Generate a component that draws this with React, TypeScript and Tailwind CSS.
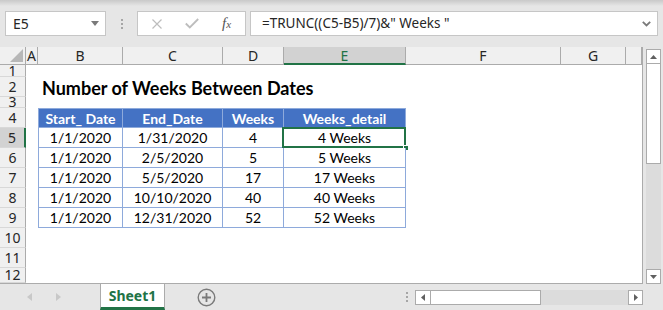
import React from "react";

const cols = [
  { id: "A", w: "w-[12px]" },
  { id: "B", w: "w-[85px]" },
  { id: "C", w: "w-[100px]" },
  { id: "D", w: "w-[61px]" },
  { id: "E", w: "w-[122px]" },
  { id: "F", w: "w-[155px]" },
  { id: "G", w: "w-[65px]" },
  { id: "", w: "w-[16px]" },
];

const rows = [
  { n: 1, h: "h-[12px]" },
  { n: 2, h: "h-[20px]" },
  { n: 3, h: "h-[11px]" },
  { n: 4, h: "h-[20px]" },
  { n: 5, h: "h-[20px]" },
  { n: 6, h: "h-[20px]" },
  { n: 7, h: "h-[20px]" },
  { n: 8, h: "h-[20px]" },
  { n: 9, h: "h-[20px]" },
  { n: 10, h: "h-[20px]" },
  { n: 11, h: "h-[20px]" },
  { n: 12, h: "h-[15px]" },
];

const header = ["Start_ Date", "End_Date", "Weeks", "Weeks_detail"];
const data: Record<number, string[]> = {
  5: ["1/1/2020", "1/31/2020", "4", "4 Weeks"],
  6: ["1/1/2020", "2/5/2020", "5", "5 Weeks"],
  7: ["1/1/2020", "5/5/2020", "17", "17 Weeks"],
  8: ["1/1/2020", "10/10/2020", "40", "40 Weeks"],
  9: ["1/1/2020", "12/31/2020", "52", "52 Weeks"],
};

const cellFont = "font-['Lato',sans-serif] text-[14px]";

const Toolbar = () => (
  <div className="h-[47px] bg-[#e6e6e6] font-['Noto_Sans',sans-serif]">
    <div className="h-[6px] bg-linear-to-b from-[#c9c9c9] to-[#e6e6e6]" />
    <div className="flex items-center pl-[5px] pt-[5px]">
      <div className="w-[101px] h-[25px] bg-white border border-[#c6c6c6] flex items-center justify-between pl-[7px] pr-[6px] text-[14px] text-[#262626]">
        <span>E5</span>
        <svg width="8" height="5" viewBox="0 0 8 5">
          <path d="M0 0h8L4 5z" fill="#7a7a7a" />
        </svg>
      </div>
      <div className="w-[31px] flex flex-col items-center gap-[2px]">
        <div className="w-[2px] h-[2px] bg-[#a6a6a6]" />
        <div className="w-[2px] h-[2px] bg-[#a6a6a6]" />
        <div className="w-[2px] h-[2px] bg-[#a6a6a6]" />
      </div>
      <div className="w-[109px] h-[25px] bg-white border border-[#c6c6c6] flex items-center pl-[14px] gap-[23px]">
        <svg width="10" height="10" viewBox="0 0 10 10">
          <path d="M0.5 0.5l9 9M9.5 0.5l-9 9" stroke="#bdbdbd" strokeWidth="1.2" />
        </svg>
        <svg width="14" height="11" viewBox="0 0 14 11">
          <path d="M0.8 5.5l4 4L13.2 1" stroke="#bdbdbd" strokeWidth="1.8" fill="none" />
        </svg>
        <span className="font-['Liberation_Serif',serif] italic text-[15px] text-[#555] leading-none">
          f<span className="text-[11px]">x</span>
        </span>
      </div>
      <div className="ml-[4px] w-[408px] h-[25px] bg-white border border-[#c6c6c6] flex items-center justify-between pl-[11px] pr-[6px] text-[13.5px] text-[#262626]">
        <span>=TRUNC((C5-B5)/7)&amp;" Weeks "</span>
        <svg width="9" height="6" viewBox="0 0 9 6">
          <path d="M0.8 0.8l3.7 3.7 3.7-3.7" stroke="#7a7a7a" strokeWidth="1.8" fill="none" />
        </svg>
      </div>
    </div>
  </div>
);

const ColumnHeader = () => (
  <div className="flex h-[18px] font-['Noto_Sans',sans-serif] text-[14px] text-[#262626]">
    <div className="w-[26px] relative bg-[#f0f0f0] border-r border-b border-[#ababab]">
      <svg className="absolute right-[2px] bottom-[2px]" width="13" height="13" viewBox="0 0 13 13">
        <path d="M13 0V13H0z" fill="#b7b7b7" />
      </svg>
    </div>
    {cols.map((c) => (
      <div
        key={c.id || "h"}
        className={`${c.w} flex items-center justify-center leading-none border-r ${
          c.id === "E"
            ? "bg-[#d2d2d2] text-[#217346] border-b-2 border-b-[#217346] border-r-[#ababab] pt-px"
            : "bg-[#f0f0f0] border-b border-[#ababab]"
        }`}
      >
        {c.id}
      </div>
    ))}
  </div>
);

const Row = ({ n, h }: { n: number; h: string }) => {
  const active = n === 5;
  const cells = cols.map((c, i) => {
    const base = `${c.w} h-full shrink-0`;
    if (n === 2 && c.id === "B") {
      return (
        <div key={i} className={`${base} relative`}>
          <span className="absolute left-[4px] top-[-2px] whitespace-nowrap font-['Lato',sans-serif] font-bold text-[18px] text-black">
            Number of Weeks Between Dates
          </span>
        </div>
      );
    }
    const col = ["B", "C", "D", "E"].indexOf(c.id);
    if (col >= 0 && n >= 4 && n <= 9) {
      const isHead = n === 4;
      const text = isHead ? header[col] : data[n][col];
      return (
        <div
          key={i}
          className={`${base} relative flex items-center justify-center border-r border-b border-[#8eaadb] ${cellFont} ${
            col === 0 ? "border-l" : ""
          } ${isHead ? "border-t bg-[#4472c4] text-white font-bold" : "bg-white text-black"}`}
        >
          {text}
          {n === 5 && col === 3 && (
            <>
              <div className="absolute -left-[2px] -top-[1px] -right-px -bottom-px border-2 border-[#217346]" />
              <div className="absolute -right-[4px] -bottom-[4px] w-[6px] h-[6px] bg-[#217346] border border-white" />
            </>
          )}
        </div>
      );
    }
    return <div key={i} className={`${base} bg-white`} />;
  });

  return (
    <div className={`flex ${h}`}>
      <div
        className={`w-[26px] shrink-0 flex items-center justify-center overflow-hidden leading-none font-['Noto_Sans',sans-serif] text-[14px] text-[#262626] border-b border-b-[#d8d8d8] ${
          active ? "bg-[#d2d2d2] border-r-2 border-r-[#217346]" : "bg-[#f0f0f0] border-r border-r-[#ababab]"
        }`}
      >
        {n}
      </div>
      {cells}
    </div>
  );
};

const VScroll = () => (
  <div className="ml-[3px] mt-[2px] w-[15px] h-[235px] flex flex-col bg-[#dcdcdc]">
    <div className="h-[15px] bg-white border border-[#ababab] flex items-center justify-center">
      <svg width="7" height="4" viewBox="0 0 7 4">
        <path d="M0 4h7L3.5 0z" fill="#606060" />
      </svg>
    </div>
    <div className="h-[100px] bg-white border-x border-b border-[#ababab]" />
    <div className="flex-1" />
    <div className="h-[15px] bg-white border border-[#ababab] flex items-center justify-center">
      <svg width="7" height="4" viewBox="0 0 7 4">
        <path d="M0 0h7L3.5 4z" fill="#606060" />
      </svg>
    </div>
  </div>
);

const TabBar = () => (
  <div className="h-[26px] flex items-stretch bg-[#e6e6e6] font-['Noto_Sans',sans-serif]">
    <div className="w-[100px] flex items-center pl-[27px] gap-[24px]">
      <svg width="5" height="8" viewBox="0 0 5 8">
        <path d="M5 0v8L0 4z" fill="#c8c8c8" />
      </svg>
      <svg width="5" height="8" viewBox="0 0 5 8">
        <path d="M0 0v8l5-4z" fill="#c8c8c8" />
      </svg>
    </div>
    <div className="w-[65px] bg-white border-x border-[#ababab] border-b-[3px] border-b-[#217346] flex items-center justify-center text-[14px] font-bold text-[#217346] leading-none">
      Sheet1
    </div>
    <div className="w-[234px] flex items-center pl-[32px]">
      <svg width="19" height="19" viewBox="0 0 19 19">
        <circle cx="9.5" cy="9.5" r="8.3" stroke="#7a7a7a" strokeWidth="1.4" fill="none" />
        <path d="M9.5 5v9M5 9.5h9" stroke="#7a7a7a" strokeWidth="1.8" />
      </svg>
    </div>
    <div className="w-[16px] flex flex-col items-center justify-center gap-[2px]">
      <div className="w-[2px] h-[2px] bg-[#a6a6a6]" />
      <div className="w-[2px] h-[2px] bg-[#a6a6a6]" />
      <div className="w-[2px] h-[2px] bg-[#a6a6a6]" />
    </div>
    <div className="flex items-center">
      <div className="w-[228px] h-[15px] flex bg-[#dcdcdc]">
        <div className="w-[16px] bg-white border border-[#ababab] flex items-center justify-center">
          <svg width="4" height="7" viewBox="0 0 4 7">
            <path d="M4 0v7L0 3.5z" fill="#606060" />
          </svg>
        </div>
        <div className="w-[110px] bg-white border-y border-r border-[#ababab]" />
        <div className="flex-1" />
        <div className="w-[15px] bg-white border border-[#ababab] flex items-center justify-center">
          <svg width="4" height="7" viewBox="0 0 4 7">
            <path d="M0 0v7l4-3.5z" fill="#606060" />
          </svg>
        </div>
      </div>
    </div>
  </div>
);

export default function App() {
  return (
    <div className="w-[663px] h-[310px] overflow-hidden flex flex-col bg-[#e6e6e6]">
      <Toolbar />
      <div className="flex h-[237px]">
        <div className="w-[643px] flex flex-col bg-white border-r border-b border-[#ababab] overflow-hidden">
          <ColumnHeader />
          {rows.map((r) => (
            <Row key={r.n} n={r.n} h={r.h} />
          ))}
        </div>
        <VScroll />
      </div>
      <TabBar />
    </div>
  );
}
